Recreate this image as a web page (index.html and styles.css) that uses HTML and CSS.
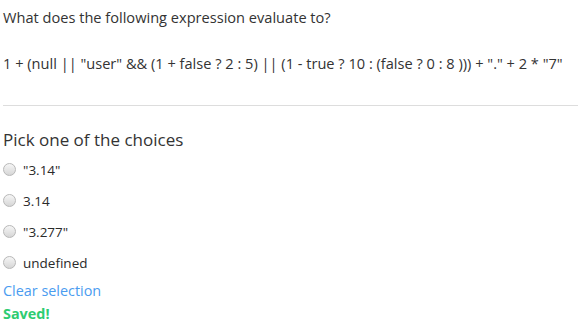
FILE: index.html
```html
<!DOCTYPE html>
<html>
<head>
<meta charset="utf-8">
<link rel="stylesheet" href="styles.css">
</head>
<body>
<div class="page">
  <div class="question">
    <p class="prompt">What does the following expression evaluate to?</p>
    <p class="expr">1 + (null || "user" &amp;&amp; (1 + false ? 2 : 5) || (1 - true ? 10 : (false ? 0 : 8 ))) + "." + 2 * "7"</p>
  </div>
  <hr class="divider">
  <h3 class="choices-title">Pick one of the choices</h3>
  <ul class="choices">
    <li class="choice"><span class="radio"></span><span class="label">"3.14"</span></li>
    <li class="choice"><span class="radio"></span><span class="label">3.14</span></li>
    <li class="choice"><span class="radio"></span><span class="label">"3.277"</span></li>
    <li class="choice"><span class="radio"></span><span class="label">undefined</span></li>
  </ul>
  <a class="clear" href="#">Clear selection</a>
  <div class="saved">Saved!</div>
</div>
</body>
</html>
```
FILE: styles.css
```css
html, body {
  margin: 0;
  padding: 0;
  background: #fff;
}
body {
  font-family: "Open Sans", "Noto Sans", sans-serif;
  font-size: 14.6px;
  color: #333;
}
.page {
  padding: 0 0 0 3px;
}
.question p {
  margin: 0;
}
.prompt {
  line-height: 20px;
  padding-top: 7px;
}
.expr {
  line-height: 20px;
  padding-top: 26px;
}
.divider {
  border: 0;
  border-top: 1px solid #ddd;
  margin: 32px 0 0 0;
  height: 0;
}
.choices-title {
  font-size: 17px;
  font-weight: 500;
  color: #333;
  margin: 22px 0 0 0;
  line-height: 24px;
}
.choices {
  list-style: none;
  margin: 2px 0 0 0;
  padding: 0;
}
.choice {
  display: flex;
  align-items: center;
  height: 31px;
}
.radio {
  width: 13px;
  height: 13px;
  border-radius: 50%;
  border: 1px solid #b8b8b8;
  background: linear-gradient(#f6f6f6, #d6d6d6);
  margin-right: 7px;
  box-sizing: border-box;
}
.label {
  font-size: 13.5px;
  color: #2a2a2a;
}
.clear {
  display: block;
  color: #4a9cf0;
  text-decoration: none;
  font-size: 14.4px;
  line-height: 20px;
  margin-top: 3px;
}
.saved {
  color: #2ecc71;
  font-weight: bold;
  font-size: 14.4px;
  line-height: 26px;
}
```
